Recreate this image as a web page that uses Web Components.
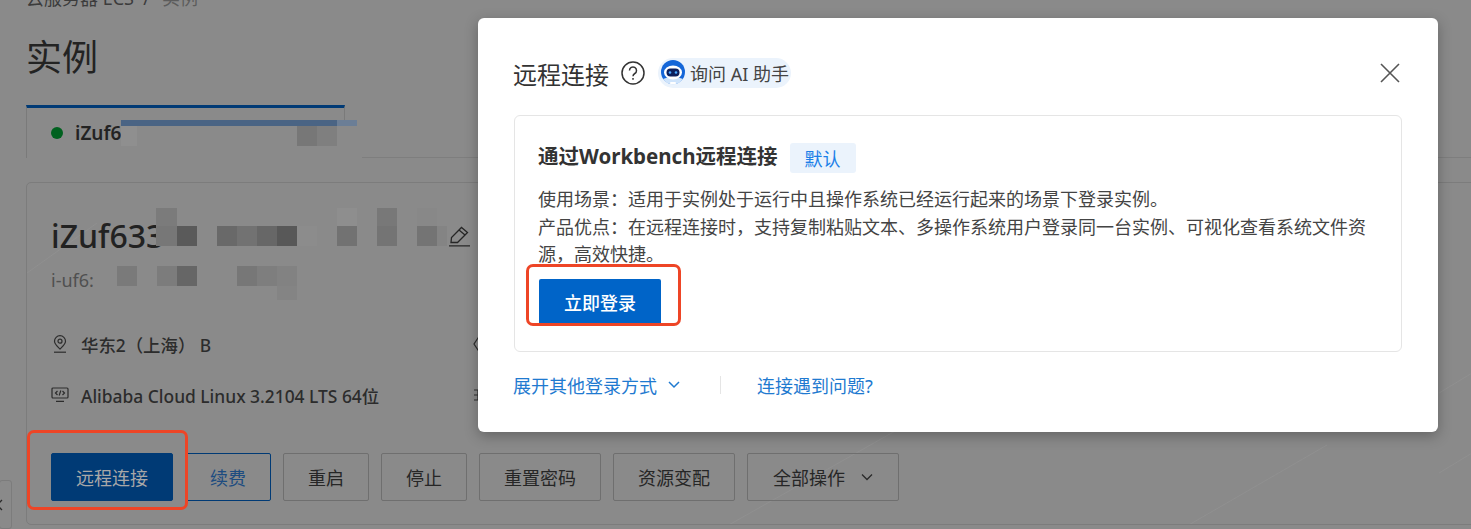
<!DOCTYPE html>
<html lang="zh">
<head>
<meta charset="utf-8">
<title>实例</title>
<style>
  html, body { margin: 0; height: 529px; overflow: hidden; background: #8a8a8a; }
  body { font-family: "Noto Sans", "Noto Sans CJK SC", sans-serif; color: #222; }
</style>
</head>
<body>
<ecs-page>
  <action-btn kind="primary" style="width:122px">远程连接</action-btn>
  <action-btn kind="outline" style="width:86px">续费</action-btn>
  <action-btn style="width:86px">重启</action-btn>
  <action-btn style="width:86px">停止</action-btn>
  <action-btn style="width:122px">重置密码</action-btn>
  <action-btn style="width:122px">资源变配</action-btn>
  <action-btn style="width:152px" caret>全部操作</action-btn>
</ecs-page>
<mosaic-patch squares='[[121,120,216,6,"#4a6484"],[337,120,20,6,"#6b7e96"],[121,126,241,32,"#8a8a8a"],[121,126,16,20,"#8f8f8f"],[297,126,20,20,"#777"],[317,126,20,20,"#7f7f7f"],
  [156,208,21,18,"#7b7b7b"],[337,208,20,18,"#8e8e8e"],[377,208,20,18,"#787878"],[417,208,20,18,"#888"],
  [156,226,21,20,"#777"],[177,226,20,20,"#5a5a5a"],[197,208,20,38,"#8a8a8a"],[217,226,20,20,"#696969"],[237,226,20,20,"#727272"],[257,226,20,20,"#676767"],[277,226,20,20,"#585858"],[297,226,20,20,"#8c8c8c"],[337,226,20,20,"#727272"],[377,226,20,20,"#747474"],[417,226,20,20,"#747474"],[437,226,10,20,"#848484"],
  [98,266,19,20,"#8a8a8a"],[117,266,20,20,"#7a7a7a"],[157,266,20,20,"#7c7c7c"],[177,266,20,20,"#666"],[237,266,20,20,"#777"],[257,266,20,20,"#7e7e7e"],[277,266,20,20,"#828282"],[277,286,20,14,"#848484"]]'></mosaic-patch>
<note-box style="left:27px;top:430px;width:161px;height:80px"></note-box>
<connect-dialog></connect-dialog>
<note-box style="left:526px;top:264px;width:155px;height:62px"></note-box>

<script>
(function() {
  'use strict';

  customElements.define('action-btn', class extends HTMLElement {
    constructor() {
      super();
      this.attachShadow({mode: 'open'});
    }
    connectedCallback() {
      let caret = this.hasAttribute('caret') ? '<svg width="12" height="8" viewBox="0 0 12 8"><path d="M1 1.500l5 5 5-5" fill="none" stroke="#2a2a2a" stroke-width="1.300"/></svg>' : '';
      this.shadowRoot.innerHTML = `
      <style>
      :host { display: inline-flex; flex: none; height: 48px; box-sizing: border-box; align-items: center; justify-content: center; gap: 16px;
        border: 1px solid #6f6f6f; border-radius: 2px; font-size: 18px; color: #262626; }
      :host([kind=primary]) { background: #003a75; border-color: #003a75; color: #a8a8a8; }
      :host([kind=outline]) { border-color: #003a75; color: #1d4c80; }
      </style>
      <slot></slot>${caret}
      `;
    }
  });

  customElements.define('ecs-page', class extends HTMLElement {
    constructor() {
      super();
      this.attachShadow({mode: 'open'});
      this.shadowRoot.innerHTML = `
      <style>
      :host { display: block; width: 1500px; padding-left: 26px; box-sizing: border-box; position: relative; }
      .crumb { height: 22px; line-height: 22px; margin-top: -13px; font-size: 18px; color: #3c3c3c; }
      .crumb span { color: #5c5c5c; margin-left: 12px; }
      h1 { margin: 29px 0 27px; height: 40px; line-height: 40px; font-size: 36px; font-weight: 400; color: #232323; }
      .tabs { height: 53px; box-sizing: border-box; border-bottom: 1px solid #7e7e7e; }
      .tab { width: 319px; height: 53px; box-sizing: border-box; border-top: 3px solid #003a75; border-left: 1px solid #7a7a7a; border-right: 1px solid #7a7a7a; background: #8a8a8a;
        display: flex; align-items: center; padding-left: 24px; gap: 12px; font-size: 19px; font-weight: 600; color: #232323; position: relative; }
      .dot { width: 12px; height: 12px; border-radius: 50%; background: #00611f; }
      .card { margin-top: 24px; height: 343px; box-sizing: border-box; border: 1px solid #7c7c7c; border-radius: 5px; padding: 30px 24px 0; position: relative; overflow: hidden; }
      .lines { position: absolute; left: 0; top: 0; }
      .name, .id, .info, .actions { position: relative; }
      .name { display: flex; align-items: center; height: 44px; font-size: 32px; font-weight: 500; color: #222; }
      .name svg { position: absolute; left: 398px; top: 13px; }
      .id { margin-top: 10px; height: 26px; line-height: 26px; font-size: 18px; color: #505050; }
      .info { display: flex; align-items: center; gap: 12px; width: 432px; height: 24px; font-size: 17.400px; font-weight: 500; color: #2c2c2c; }
      .info .ico { flex: none; width: 18px; display: flex; justify-content: center; }
      .info .side { margin-left: auto; flex: none; }
      .info.first { margin-top: 39px; }
      .info.second { margin-top: 27px; }
      .actions { display: flex; gap: 12px; margin-top: 46px; }
      /* the crumb's negative margin pulls the host up by 13px, hence 493 for y=480 */
      .pager { position: absolute; left: -1px; top: 493px; width: 13px; height: 49px; box-sizing: border-box; border: 1px solid #7c7c7c; border-radius: 3px; overflow: hidden; }
      .pager svg { position: absolute; left: -4px; top: 18px; }
      </style>
      <div class="crumb">云服务器 ECS &nbsp;/<span>实例</span></div>
      <h1>实例</h1>
      <div class="tabs"><div class="tab"><i class="dot"></i>iZuf6</div></div>
      <div class="card">
        <svg class="lines" width="1450" height="343" fill="none" stroke="#909090" stroke-width="1"><path d="M0 90L70 40M1412 210L1470 175M1412 290L1470 255M700 343L900 230M1160 343L1300 262"/></svg>
        <div class="name">iZuf633<svg width="21" height="21" viewBox="0 0 21 21" fill="none" stroke="#262626" stroke-width="1.300"><path d="M2 16.500L2.500 11.500 12.500 1.500l6 5-10 10z"/><path d="M10 4l6 5"/><path d="M0 19.800h21"/></svg></div>
        <div class="id">i-uf6:</div>
        <div class="info first"><span class="ico"><svg width="16" height="18" viewBox="0 0 16 18" fill="none" stroke="#2c2c2c" stroke-width="1.200"><path d="M8 14C5 11 2.500 9 2.500 6.200a5.500 5.500 0 0 1 11 0C13.500 9 11 11 8 14z"/><circle cx="8" cy="6.200" r="2"/><path d="M2 17.200h12"/></svg></span>华东2（上海） B<svg class="side" width="10" height="14" viewBox="0 0 10 14" fill="none" stroke="#2c2c2c" stroke-width="1.200"><path d="M5 1L1 7l4 6 4-6z"/></svg></div>
        <div class="info second"><span class="ico"><svg width="18" height="16" viewBox="0 0 18 16" fill="none" stroke="#2c2c2c" stroke-width="1.200"><rect x="1" y="1" width="16" height="10" rx="1"/><path d="M6.500 4L4.500 6l2 2M11.500 4l2 2-2 2M9.800 3.500L8.200 8.500M5 14.300h8"/></svg></span>Alibaba Cloud Linux 3.2104 LTS 64位<svg class="side" width="10" height="14" viewBox="0 0 10 14" fill="none" stroke="#2c2c2c" stroke-width="1.200"><path d="M1 2h8M1 7h8M1 12h8M5 2v10"/></svg></div>
        <div class="actions"><slot></slot></div>
      </div>
      <div class="pager"><svg width="8" height="12" viewBox="0 0 8 12"><path d="M6 1L1 6l5 5" fill="none" stroke="#2a2a2a" stroke-width="1.300"/></svg></div>
      `;
    }
  });

  customElements.define('mosaic-patch', class extends HTMLElement {
    constructor() {
      super();
      this.attachShadow({mode: 'open'});
    }
    connectedCallback() {
      let squares = JSON.parse(this.getAttribute('squares'));
      let cells = squares.map(s => `<i style="left:${s[0]}px;top:${s[1]}px;width:${s[2]}px;height:${s[3]}px;background:${s[4]}"></i>`).join('');
      this.shadowRoot.innerHTML = `
      <style>
      :host { display: block; position: absolute; left: 0; top: 0; }
      i { position: absolute; display: block; }
      </style>
      ${cells}
      `;
    }
  });

  customElements.define('note-box', class extends HTMLElement {
    constructor() {
      super();
      this.attachShadow({mode: 'open'});
      this.shadowRoot.innerHTML = `
      <style>
      :host { display: block; position: absolute; box-sizing: border-box; border: 3px solid #ee4526; border-radius: 7px; z-index: 5; }
      </style>
      `;
    }
  });

  customElements.define('connect-dialog', class extends HTMLElement {
    constructor() {
      super();
      this.attachShadow({mode: 'open'});
      this.shadowRoot.innerHTML = `
      <style>
      :host { display: block; position: absolute; left: 478px; top: 18px; width: 960px; height: 414px; box-sizing: border-box; padding: 40px 36px 0 35px;
        background: #fff; border-radius: 6px; box-shadow: 0 4px 14px rgba(0,0,0,.28); color: #333; z-index: 3; }
      header { display: flex; align-items: center; height: 30px; }
      h2 { margin: 0; padding-top: 3px; font-size: 24px; font-weight: 400; color: #333; line-height: 30px; }
      .help { margin-left: 12px; }
      .ask { margin-left: 13px; height: 30px; width: 133px; box-sizing: border-box; border-radius: 15px; background: #ebf3fc; display: flex; align-items: center; gap: 4px; padding-left: 2px; font-size: 18px; color: #444; white-space: nowrap; }
      .close { margin-left: auto; margin-right: 2px; }
      .box { margin: 27px 0 0 1px; height: 237px; box-sizing: border-box; border: 1px solid #e5e5e5; border-radius: 6px; padding: 27px 23px 0; }
      .head { display: flex; align-items: center; height: 30px; }
      h3 { margin: 0 0 4px; font-size: 20.500px; font-weight: 700; color: #333; line-height: 30px; }
      .tag { margin-left: 12px; width: 66px; height: 30px; border-radius: 3px; background: #ebf3fc; color: #1b7fe8; font-size: 18px; display: flex; align-items: center; justify-content: center; }
      p { margin: 13px 0 0; font-size: 18px; line-height: 27.500px; color: #444; }
      .go { margin: 10px 0 0 1px; width: 122px; height: 46px; border-radius: 2px 2px 0 0; background: #0064c8; color: #fff; font-size: 18px; font-weight: 500; display: flex; align-items: center; justify-content: center; }
      footer { display: flex; align-items: center; margin-top: 21px; height: 24px; font-size: 18px; color: #1f7ad0; }
      .caret { margin-left: 11px; }
      .sep { width: 1px; height: 18px; background: #e5e5e5; margin: 0 36px 0 40px; }
      </style>
      <header>
        <h2>远程连接</h2>
        <svg class="help" width="24" height="24" viewBox="0 0 24 24" fill="none" stroke="#333" stroke-width="1.500"><circle cx="12" cy="12" r="11"/><path d="M8.500 9.500a3.500 3.500 0 1 1 5.300 3c-1.200.7-1.800 1.300-1.800 2.700"/><path d="M12 17v1.800"/></svg>
        <div class="ask">
          <svg width="26" height="28" viewBox="0 0 26 28"><circle cx="13" cy="13" r="12" fill="#1466d8"/><path d="M3 20a12 12 0 0 0 20 0l-3-1H6z" fill="#cfe4fb"/><ellipse cx="13" cy="13.500" rx="9" ry="7" fill="#fff"/><rect x="6.500" y="9.500" width="13" height="8" rx="4" fill="#0c1f5c"/><circle cx="10" cy="13.500" r="1.300" fill="#4aa8ff"/><circle cx="16" cy="13.500" r="1.300" fill="#4aa8ff"/><rect x="10" y="23" width="6" height="2" rx="1" fill="#fff"/></svg>
          询问 AI 助手
        </div>
        <svg class="close" width="20" height="20" viewBox="0 0 20 20"><path d="M1 1l18 18M19 1L1 19" stroke="#555" stroke-width="1.600"/></svg>
      </header>
      <section class="box">
        <div class="head"><h3>通过Workbench远程连接</h3><span class="tag">默认</span></div>
        <p>使用场景：适用于实例处于运行中且操作系统已经运行起来的场景下登录实例。<br>产品优点：在远程连接时，支持复制粘贴文本、多操作系统用户登录同一台实例、可视化查看系统文件资源，高效快捷。</p>
        <div class="go">立即登录</div>
      </section>
      <footer>
        <span>展开其他登录方式</span>
        <svg class="caret" width="12" height="8" viewBox="0 0 12 8"><path d="M1 1l5 5 5-5" fill="none" stroke="#1f7ad0" stroke-width="1.500"/></svg>
        <i class="sep"></i>
        <span>连接遇到问题?</span>
      </footer>
      `;
    }
  });
}());
</script>
</body>
</html>
